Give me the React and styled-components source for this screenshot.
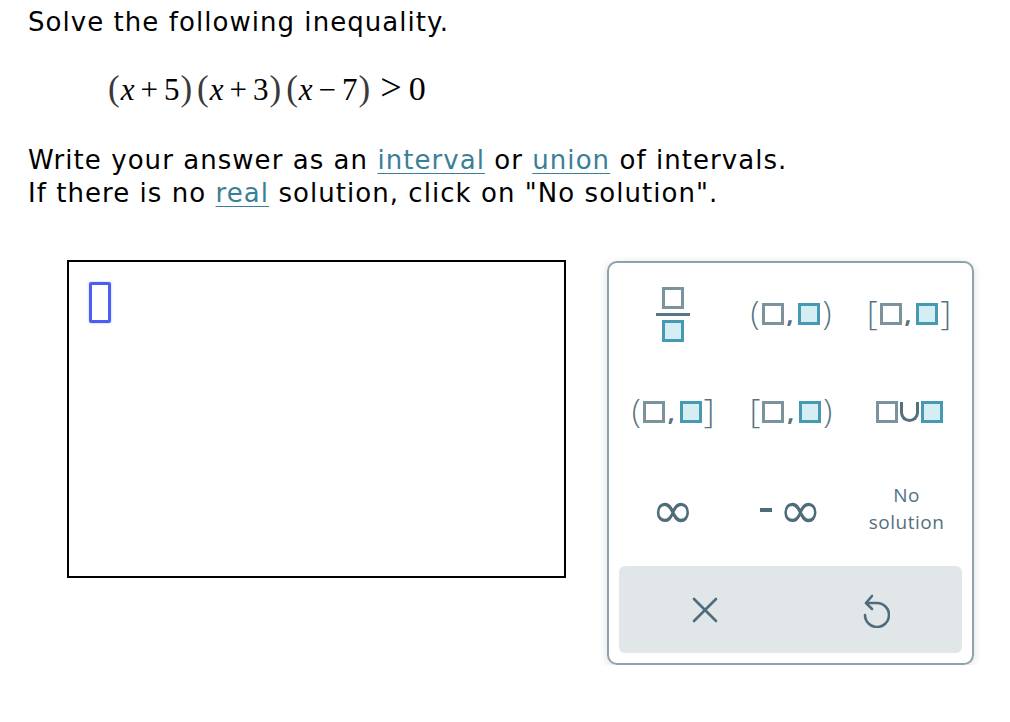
import React from 'react';
import styled, {createGlobalStyle} from 'styled-components';

const GlobalStyle = createGlobalStyle`
  body {
    margin: 0;
    background: #fff;
    font-family: "DejaVu Sans", Verdana, sans-serif;
    color: #000;
  }
`;

const Page = styled.div`
  padding: 6px 0 0 28px;
`;

const Prompt = styled.p`
  margin: 0;
  font-size: 26px;
  line-height: 33px;
  letter-spacing: 1.05px;
`;

const Math = styled.div`
  margin: 28px 0 0 79px;
  height: 40px;
  display: flex;
  align-items: baseline;
  font-family: "Liberation Serif", "Times New Roman", serif;
  font-size: 31px;
  line-height: 40px;
`;

const Paren = styled.span`
  color: #3a3a3a;
  font-size: 35px;
  margin: 0 ${p => p.$gap || 1}px 0 1px;
`;

const Var = styled.i`
  font-style: italic;
`;

const Op = styled.span`
  margin: 0 ${p => p.$space || 6}px;
`;

const Rel = styled.span`
  font-size: 38px;
  margin: 0 7px 0 9px;
`;

const Digit = styled.span`
  font-size: 34px;
`;

const Instructions = styled(Prompt)`
  margin-top: 37px;
`;

const Link = styled.a`
  color: #3a7f96;
  text-decoration: underline;
  text-underline-offset: 4px;
  text-decoration-thickness: 1px;
`;

const Work = styled.div`
  display: flex;
  align-items: flex-start;
  margin-top: 50px;
`;

const AnswerBox = styled.div`
  box-sizing: border-box;
  width: 499px;
  height: 318px;
  margin-left: 39px;
  border: 2px solid #000;
  padding: 20px;
`;

const Cursor = styled.div`
  box-sizing: border-box;
  width: 22px;
  height: 41px;
  border: 3px solid #4b5df2;
  border-radius: 2px;
  box-shadow: 0 0 2px rgba(75, 93, 242, 0.5);
`;

const Keypad = styled.div`
  box-sizing: border-box;
  width: 367px;
  height: 404px;
  margin: 1px 0 0 41px;
  border: 2px solid #8ea2ab;
  border-radius: 10px;
  padding: 2px 10px 10px;
  display: flex;
  flex-direction: column;
  box-shadow: 0 2px 8px rgba(0, 0, 0, 0.14);
`;

const KeyGrid = styled.div`
  display: grid;
  grid-template-columns: repeat(3, 1fr);
  grid-auto-rows: 98px;
  margin: 0 -6px 0 -5px;
`;

const Key = styled.button`
  display: flex;
  align-items: center;
  justify-content: center;
  background: none;
  border: none;
  padding: 0;
  color: #52707e;
  cursor: pointer;
`;

const Actions = styled.div`
  display: grid;
  grid-template-columns: 1fr 1fr;
  height: 87px;
  margin-top: 7px;
  background: #e1e6e9;
  border-radius: 6px;
`;

const Box = styled.span`
  display: block;
  box-sizing: border-box;
  width: 22px;
  height: 22px;
  border: 3px solid ${p => (p.$filled ? '#4699b3' : '#7b939c')};
  background: ${p => (p.$filled ? '#d5eef4' : '#fff')};
`;

const Fraction = styled.span`
  display: flex;
  flex-direction: column;
  align-items: center;
  gap: 4px;
`;

const Bar = styled.span`
  display: block;
  width: 34px;
  height: 3px;
  background: #5a7585;
`;

const Interval = styled.span`
  display: flex;
  align-items: center;
  font-family: "Open Sans", sans-serif;
`;

const Bracket = styled.span`
  font-size: 33px;
  font-weight: 300;
  line-height: 1;
  color: #557481;
  margin: ${p => (p.$side === 'left' ? '-4px 2px 0 0' : '-4px 0 0 2px')};
`;

const Comma = styled.span`
  font-size: 24px;
  font-weight: 700;
  line-height: 22px;
  height: 22px;
  color: #557481;
  margin: 0 5px 0 3px;
`;

const Union = styled.span`
  display: block;
  box-sizing: border-box;
  width: 19px;
  height: 20px;
  margin: 0 2px;
  border: 3px solid #52707e;
  border-top: none;
  border-radius: 0 0 10px 10px;
`;

const Infinity = styled.span`
  font-family: "DejaVu Sans", sans-serif;
  font-size: 52px;
  line-height: 40px;
  height: 40px;
  color: #4e6c79;
`;

const Minus = styled.span`
  display: block;
  width: 12px;
  height: 4px;
  margin-right: 7px;
  background: #4e6c79;
`;

const NoSolution = styled.span`
  font-family: "Open Sans", sans-serif;
  font-size: 19px;
  letter-spacing: 0.5px;
  line-height: 27px;
  color: #557080;
  text-align: center;
  margin: -2px 5px 0 0;
`;

const IntervalKey = ({open, close}) => (
  <Key>
    <Interval>
      <Bracket $side="left">{open}</Bracket>
      <Box />
      <Comma>,</Comma>
      <Box $filled />
      <Bracket $side="right">{close}</Bracket>
    </Interval>
  </Key>
);

const CloseIcon = () => (
  <svg width="26" height="26" viewBox="0 0 26 26" fill="none" stroke="#4e6c7a" strokeWidth="2.6" strokeLinecap="round">
    <line x1="2" y1="2" x2="24" y2="24" />
    <line x1="24" y1="2" x2="2" y2="24" />
  </svg>
);

const UndoIcon = () => (
  <svg width="28" height="36" viewBox="0 0 28 36" fill="none" stroke="#4e6c7a" strokeWidth="2.6" strokeLinecap="round" strokeLinejoin="round">
    <path d="M10 4 L4 11 L10 17" />
    <path d="M4 11 H15 A12 12 0 1 1 3 23" />
  </svg>
);

export default function App() {
  return (
    <Page>
      <GlobalStyle />
      <Prompt>Solve the following inequality.</Prompt>
      <Math>
        <Paren>(</Paren><Var>x</Var><Op>+</Op>5<Paren $gap={4}>)</Paren>
        <Paren>(</Paren><Var>x</Var><Op>+</Op>3<Paren $gap={4}>)</Paren>
        <Paren>(</Paren><Var>x</Var><Op>−</Op>7<Paren>)</Paren>
        <Rel>&gt;</Rel><Digit>0</Digit>
      </Math>
      <Instructions>
        Write your answer as an <Link>interval</Link> or <Link>union</Link> of intervals.<br />
        If there is no <Link>real</Link> solution, click on "No solution".
      </Instructions>
      <Work>
        <AnswerBox>
          <Cursor />
        </AnswerBox>
        <Keypad>
          <KeyGrid>
            <Key>
              <Fraction>
                <Box />
                <Bar />
                <Box $filled />
              </Fraction>
            </Key>
            <IntervalKey open="(" close=")" />
            <IntervalKey open="[" close="]" />
            <IntervalKey open="(" close="]" />
            <IntervalKey open="[" close=")" />
            <Key>
              <Box />
              <Union />
              <Box $filled />
            </Key>
            <Key>
              <Infinity>∞</Infinity>
            </Key>
            <Key>
              <Minus />
              <Infinity>∞</Infinity>
            </Key>
            <Key>
              <NoSolution>No<br />solution</NoSolution>
            </Key>
          </KeyGrid>
          <Actions>
            <Key><CloseIcon /></Key>
            <Key><UndoIcon /></Key>
          </Actions>
        </Keypad>
      </Work>
    </Page>
  );
}
